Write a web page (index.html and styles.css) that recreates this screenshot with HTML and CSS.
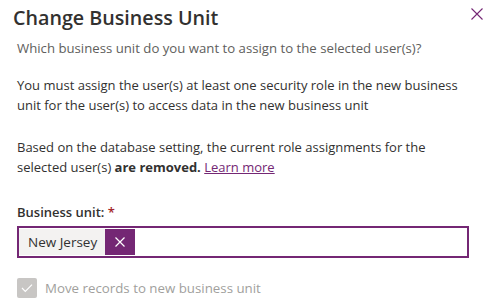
FILE: index.html
```html
<!DOCTYPE html>
<html lang="en">
<head>
<meta charset="utf-8">
<title>Change Business Unit</title>
<link rel="stylesheet" href="styles.css">
</head>
<body>
<div class="dialog">
  <div class="header">
    <h1 class="title">Change Business Unit</h1>
    <button class="close" aria-label="Close">
      <svg width="12" height="12" viewBox="0 0 12 12"><path d="M0.5 0.5 L11.5 11.5 M11.5 0.5 L0.5 11.5" stroke="#742774" stroke-width="1.1" fill="none"/></svg>
    </button>
  </div>
  <p class="subtitle">Which business unit do you want to assign to the selected user(s)?</p>
  <p class="para p1">You must assign the user(s) at least one security role in the new business unit for the user(s) to access data in the new business unit</p>
  <p class="para p2">Based on the database setting, the current role assignments for the selected user(s) <b>are removed.</b> <a class="link" href="#">Learn more</a></p>
  <div class="label">Business unit: <span class="req">*</span></div>
  <div class="input">
    <div class="chip">
      <span class="chip-text">New Jersey</span>
      <span class="chip-x">
        <svg width="10" height="10" viewBox="0 0 10 10"><path d="M0.5 0.5 L9.5 9.5 M9.5 0.5 L0.5 9.5" stroke="#fff" stroke-width="1.2" fill="none"/></svg>
      </span>
    </div>
  </div>
  <div class="check-row">
    <span class="checkbox">
      <svg width="12" height="10" viewBox="0 0 12 10"><path d="M1 5 L4.3 8.3 L11 1.6" stroke="#fff" stroke-width="1.2" fill="none"/></svg>
    </span>
    <span class="check-label">Move records to new business unit</span>
  </div>
</div>
</body>
</html>
```
FILE: styles.css
```css
html, body { margin: 0; padding: 0; background: #fff; }
body { font-family: "Open Sans", "Noto Sans", sans-serif; color: #323130; }
.dialog { width: 487px; height: 306px; box-sizing: border-box; padding: 4px 4px 0 17px; }
.header { display: flex; justify-content: space-between; align-items: flex-start; }
.title { margin: 0 0 0 -4px; font-size: 19.7px; line-height: 28px; font-weight: 600; color: #323130; }
.close { border: 0; background: none; padding: 0; margin: 4px 0 0 0; width: 12px; height: 12px; display: flex; }
.subtitle { margin: 6px 0 0 0; font-size: 13.2px; line-height: 20px; color: #605e5c; }
.para { margin: 0; font-size: 13px; line-height: 20px; color: #323130; width: 457px; }
.p1 { margin-top: 17px; }
.p2 { margin-top: 22px; }
.para b { font-weight: 700; }
.link { color: #742774; text-decoration: underline; }
.label { margin-top: 25px; font-size: 13px; line-height: 20px; font-weight: 600; color: #323130; }
.req { color: #a4262c; }
.input { margin-top: 4px; width: 452px; height: 32px; box-sizing: border-box; border: 2px solid #742774; padding: 1px 0; display: flex; }
.chip { display: flex; height: 26px; background: #f3f2f1; }
.chip-text { padding: 0 8px 0 9px; font-size: 13.5px; line-height: 26px; color: #323130; }
.chip-x { width: 30px; background: #742774; display: flex; align-items: center; justify-content: center; }
.check-row { margin-top: 20px; display: flex; align-items: center; gap: 8px; }
.checkbox { width: 20px; height: 20px; border-radius: 2px; background: #c8c6c4; display: flex; align-items: center; justify-content: center; }
.check-label { font-size: 13.3px; line-height: 20px; color: #a19f9d; }
```
